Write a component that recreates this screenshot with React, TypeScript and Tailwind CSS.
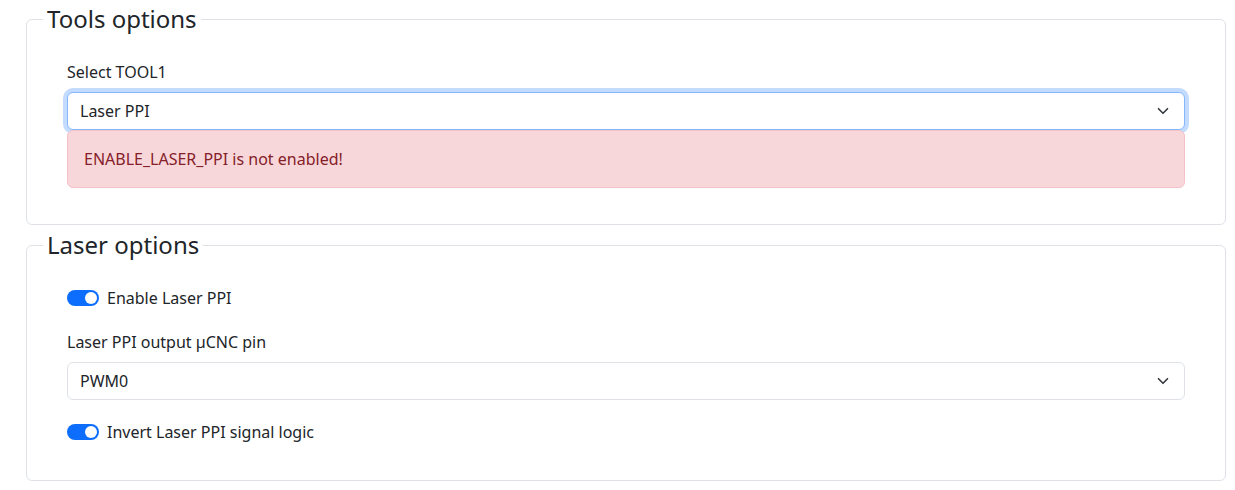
import React from "react";

const font = { fontFamily: '"Noto Sans", "Liberation Sans", sans-serif' };

function Chevron() {
  return (
    <svg width="12" height="12" viewBox="0 0 16 16" className="shrink-0">
      <path d="m2 5 6 6 6-6" fill="none" stroke="#343a40" strokeWidth="2.2" strokeLinecap="round" strokeLinejoin="round" />
    </svg>
  );
}

function Switch({ label }: { label: string }) {
  return (
    <div className="flex items-center h-6">
      <div className="w-8 h-4 rounded-full bg-[#0d6efd] flex items-center justify-end pr-[2px]">
        <div className="w-3 h-3 rounded-full bg-white" />
      </div>
      <span className="ml-2 leading-6">{label}</span>
    </div>
  );
}

function Select({ value, focused }: { value: string; focused?: boolean }) {
  return (
    <div
      className={
        focused
          ? "flex items-center justify-between h-[38px] px-3 pr-[15px] rounded-md border border-[#86b7fe] bg-white shadow-[0_0_0_4px_rgba(13,110,253,0.25)]"
          : "flex items-center justify-between h-[38px] px-3 pr-[15px] rounded-md border border-[#dee2e6] bg-white"
      }
    >
      <span className="leading-6">{value}</span>
      <Chevron />
    </div>
  );
}

export default function App() {
  return (
    <div className="bg-white text-[#212529] text-base pt-[5px] h-[490px] overflow-hidden" style={font}>
      <fieldset className="ml-[26px] w-[1200px] border border-[#dee2e6] rounded-md px-4">
        <legend className="px-1 text-[24px] leading-[1.2]">Tools options</legend>
        <div className="px-6 pt-[26px] pb-[36px]">
          <div className="leading-6 mb-2">Select TOOL1</div>
          <Select value="Laser PPI" focused />
          <div className="h-[58px] px-4 flex items-center rounded-md border border-[#f5c2c7] bg-[#f8d7da] text-[#842029]">
            ENABLE_LASER_PPI is not enabled!
          </div>
        </div>
      </fieldset>
      <fieldset className="ml-[26px] mt-[6px] w-[1200px] border border-[#dee2e6] rounded-md px-4">
        <legend className="px-1 text-[24px] leading-[1.2]">Laser options</legend>
        <div className="px-6 pt-[26px] pb-[36px]">
          <Switch label="Enable Laser PPI" />
          <div className="leading-6 mt-5 mb-2">Laser PPI output µCNC pin</div>
          <Select value="PWM0" />
          <div className="mt-5">
            <Switch label="Invert Laser PPI signal logic" />
          </div>
        </div>
      </fieldset>
    </div>
  );
}
